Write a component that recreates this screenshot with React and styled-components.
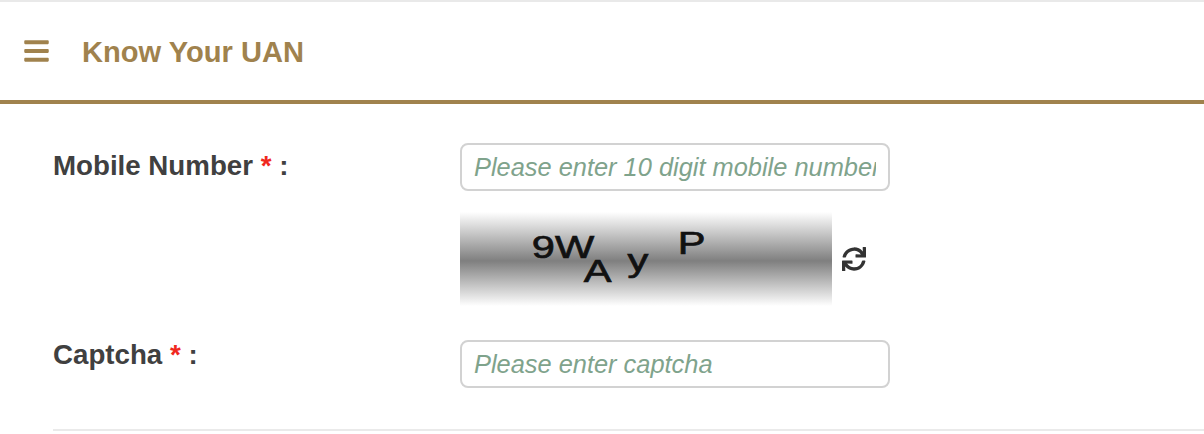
import styled, { createGlobalStyle } from "styled-components";
import { FaBars, FaSync } from "react-icons/fa";

const GlobalStyle = createGlobalStyle`
  html, body {
    margin: 0;
    padding: 0;
    background: #fff;
    font-family: "Liberation Sans", Arial, sans-serif;
  }
`;

export default function App() {
  return (
    <Page>
      <GlobalStyle />
      <Header>
        <MenuIcon />
        <Title>Know Your UAN</Title>
      </Header>
      <Form>
        <Row>
          <Label $lineHeight={46}>
            Mobile Number <Required>*</Required> :
          </Label>
          <Input type="text" placeholder="Please enter 10 digit mobile number" />
        </Row>
        <CaptchaRow>
          <CaptchaImage>
            <svg width="372" height="94" viewBox="0 0 372 94">
              <CaptchaText x="79" y="46">9W</CaptchaText>
              <CaptchaText x="127" y="70">A</CaptchaText>
              <CaptchaText x="170" y="59">y</CaptchaText>
              <CaptchaText x="221" y="42">P</CaptchaText>
            </svg>
          </CaptchaImage>
          <RefreshIcon />
        </CaptchaRow>
        <Row>
          <Label $lineHeight={30}>
            Captcha <Required>*</Required> :
          </Label>
          <Input type="text" placeholder="Please enter captcha" />
        </Row>
      </Form>
    </Page>
  );
}

const Page = styled.div`
  width: 1204px;
  height: 434px;
  overflow: hidden;
  border-top: 2px solid #e9e9e9;
  box-sizing: border-box;
`;

const Header = styled.div`
  display: flex;
  align-items: center;
  box-sizing: border-box;
  height: 102px;
  padding: 0 0 0 24px;
  border-bottom: 4px solid #a0824d;
`;

const MenuIcon = styled(FaBars)`
  width: 25px;
  height: 28px;
  color: #a0824d;
  margin-right: 33px;
`;

const Title = styled.h1`
  margin: 0;
  padding-top: 3px;
  font-size: 29.1px;
  font-weight: 700;
  color: #a0824d;
`;

const Form = styled.div`
  display: flex;
  flex-direction: column;
  margin: 39px 0 0 53px;
  height: 288px;
  box-sizing: border-box;
  border-bottom: 2px solid #eaeaea;
`;

const Row = styled.div`
  display: grid;
  grid-template-columns: 407px 430px;
`;

const CaptchaRow = styled.div`
  display: flex;
  align-items: center;
  margin: 21px 0 34px 407px;
`;

const Label = styled.label`
  font-size: 27.7px;
  font-weight: 700;
  line-height: ${(props) => props.$lineHeight}px;
  color: #404040;
`;

const Required = styled.span`
  color: #f0281e;
`;

const Input = styled.input`
  box-sizing: border-box;
  width: 430px;
  height: 48px;
  padding: 0 12px;
  border: 2px solid #d2d2d2;
  border-radius: 8px;
  background: #fff;
  font-family: "Liberation Sans", Arial, sans-serif;
  font-size: 25.4px;
  outline: none;

  &::placeholder {
    color: #7fa38c;
    font-style: italic;
    opacity: 1;
  }
`;

const CaptchaImage = styled.div`
  width: 372px;
  height: 94px;
  background: linear-gradient(
    to bottom,
    #ffffff 0%,
    #7f7f7f 52%,
    #ffffff 100%
  );

  svg {
    display: block;
  }
`;

const CaptchaText = styled.text`
  font-family: "Liberation Sans", Arial, sans-serif;
  font-size: 32px;
  fill: #111;
  stroke: #111;
  stroke-width: 0.7px;
  transform-box: fill-box;
  transform-origin: center;
  transform: scaleX(1.3);
`;

const RefreshIcon = styled(FaSync)`
  width: 24px;
  height: 24px;
  margin-left: 10px;
  color: #333;
`;
